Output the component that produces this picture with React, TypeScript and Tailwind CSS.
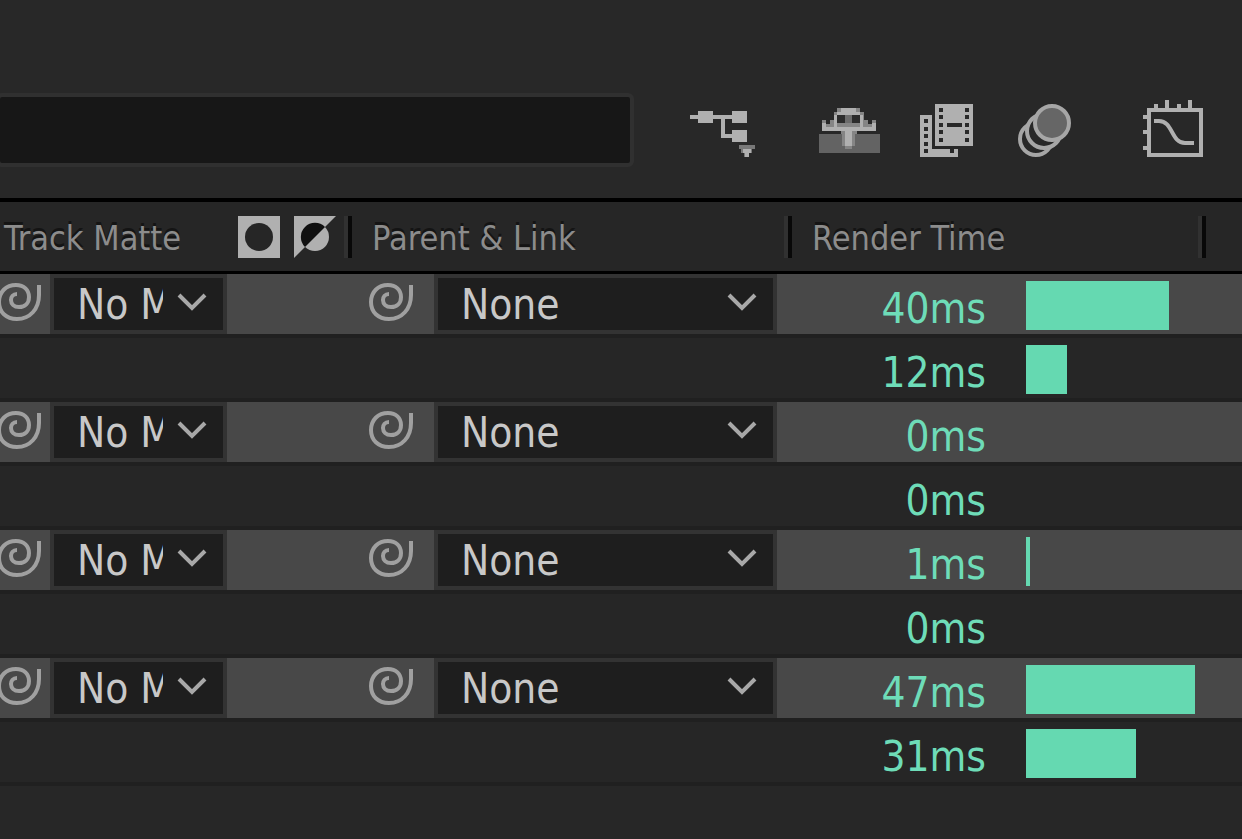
import { ReactNode } from "react"

type Layer = {
  id: number
  ms: number
  isLayer: boolean
}

const rows: Layer[] = [
  { id: 1, ms: 39.7, isLayer: true },
  { id: 2, ms: 11.5, isLayer: false },
  { id: 3, ms: 0, isLayer: true },
  { id: 4, ms: 0, isLayer: false },
  { id: 5, ms: 1.1, isLayer: true },
  { id: 6, ms: 0, isLayer: false },
  { id: 7, ms: 47, isLayer: true },
  { id: 8, ms: 30.5, isLayer: false },
]

const PX_PER_MS = 3.6

function FlowchartIcon() {
  return (
    <svg width="65" height="60" viewBox="0 0 65 60" fill="#b0b0b0">
      <path d="M0 15h8v-4h15v4h19v-4h15v12H42v-4h-7v15h7v-4h15v12H42v-4H31V19h-8v4H8v-4H0z" />
      <path d="M49 45h16v4h-3v4h-3v4h-5v-4h-3v-4h-2z" fill="#787878" />
      <path d="M53 49h8v4h-2v4h-4v-4h-2z" />
    </svg>
  )
}

function ShyIcon() {
  return (
    <svg width="61" height="60" viewBox="0 0 61 60">
      <path d="M0 34h61v19H0z" fill="#636363" />
      <path d="M3 20h4v4h4v-4h4v-5h30v5h4v4h4v-4h4v7H3zM15 12h30v5H15zM18 8h23v4H18zM22 31h16v3H22z" fill="#858585" />
      <path d="M3 23h4v4h8V15h3v-3h4V8h15v4h4v3h3v12h9v-4h4v8H3z" fill="#b0b0b0" />
      <path d="M18 15h23v12H18z" fill="#858585" />
      <path d="M18 15h8v8h-8zM33 15h8v8h-8z" fill="#2c2c2c" />
      <path d="M26 15h7v8h-7z" fill="#6c6c6c" />
      <path d="M23 31h3v15h-3zM33 31h3v15h-3zM26 46h7v3h-7z" fill="#858585" />
      <path d="M26 31h7v15h-7z" fill="#b0b0b0" />
    </svg>
  )
}

function FrameBlendIcon() {
  return (
    <svg width="58" height="60" viewBox="0 0 58 60">
      <path d="M0 15h12v34h26v8H0z" fill="#b0b0b0" />
      <path d="M15 4h38v42H15z" fill="#b0b0b0" />
      <g fill="#282828">
        {[8, 15, 23, 30, 38].map((y) => (
          <path key={y} d={`M19 ${y}h4v4h-4zM45 ${y}h4v4h-4z`} />
        ))}
        {[19, 27, 34, 42, 49].map((y) => (
          <path key={y} d={`M4 ${y}h4v4h-4z`} />
        ))}
        <path d="M27 23h15v4H27zM30 49h4v4h-4z" />
      </g>
    </svg>
  )
}

function MotionBlurIcon() {
  return (
    <svg width="53" height="60" viewBox="0 0 53 60" fill="#282828" stroke="#a6a6a6" strokeWidth="4">
      <circle cx="18" cy="39" r="16" />
      <circle cx="26" cy="31" r="17" />
      <circle cx="34" cy="23" r="17" fill="#666666" />
    </svg>
  )
}

function GraphEditorIcon() {
  return (
    <svg width="60" height="60" viewBox="0 0 60 60" fill="#b0b0b0">
      <path d="M11 4h4v4h-4zM22 0h4v8h-4zM34 4h4v4h-4zM45 0h4v8h-4zM0 15h4v4H0zM0 30h4v4H0zM0 46h4v4H0z" />
      <rect x="6" y="10" width="52" height="45" fill="none" stroke="#b0b0b0" strokeWidth="4" />
      <path d="M11 21h5c14 0 12 22 26 22h9" fill="none" stroke="#b0b0b0" strokeWidth="4" />
    </svg>
  )
}

function MatteAlphaIcon() {
  return (
    <svg width="42" height="42" viewBox="0 0 42 42">
      <path d="M0 0h42v42H0z" fill="#b0b0b0" />
      <circle cx="21" cy="21" r="14" fill="#262626" />
    </svg>
  )
}

function MatteInvertIcon() {
  return (
    <svg width="42" height="42" viewBox="0 0 42 42">
      <path d="M0 0h42L0 42z" fill="#b0b0b0" />
      <circle cx="21" cy="21" r="14" fill="#b0b0b0" />
      <path d="M31 11A14 14 0 0 0 11 31z" fill="#101010" />
    </svg>
  )
}

function PickWhip() {
  return (
    <svg width="46" height="42" viewBox="0 0 46 42" fill="none" stroke="#a0a0a0" strokeWidth="4">
      <path d="M43 4V14C43 28 34 38 21 38C10 38 3 31 3 21C3 11 10 4 20 4C28 4 33 9 33 16C33 22 29 26 23 26C18 26 15 23 15 19C15 16 17 13 21 13" />
    </svg>
  )
}

function ToolButton({ label, children }: { label: string; children: ReactNode }) {
  return (
    <button type="button" aria-label={label} className="shrink-0">
      {children}
    </button>
  )
}

function Dropdown({ label, value, className }: { label: string; value: string; className: string }) {
  return (
    <div className={`relative shrink-0 ${className}`}>
      <select
        aria-label={label}
        className="block w-full h-[60px] appearance-none border-4 border-[#333333] bg-[#1e1e1e] pt-[2px] pl-[23px] pr-[60px] text-[42px] leading-[50px] text-[#c8c8c8] outline-none"
      >
        <option>{value}</option>
      </select>
      <svg
        className="absolute right-5 top-4 pointer-events-none"
        width="30"
        height="24"
        viewBox="0 0 30 24"
        fill="none"
        stroke="#a8a8a8"
        strokeWidth="4"
      >
        <path d="M2 5l13 13L28 5" />
      </svg>
    </div>
  )
}

function HeaderCell({ title, className, children }: { title: string; className: string; children?: ReactNode }) {
  return (
    <th scope="col" className="h-[72px] p-0 border-b-[3px] border-black bg-[#262626] font-normal">
      <div className="h-[42px] border-r-4 border-[#080808]">
        <div className={`flex items-center justify-between h-full border-r-4 border-[#313131] ${className}`}>
          <span className="pt-[3px] whitespace-nowrap">{title}</span>
          {children}
        </div>
      </div>
    </th>
  )
}

export default function App() {
  return (
    <div className="min-h-screen overflow-hidden bg-[#272727] font-['DejaVu_Sans_Condensed','Noto_Sans',sans-serif] antialiased">
      {/* Search and timeline switches */}
      <div className="flex items-center pt-[93px] pb-[31px] pr-[39px] bg-[#282828]">
        <input
          type="text"
          aria-label="Search layers"
          className="flex-1 min-w-0 h-[74px] -ml-1 px-4 rounded-md border-4 border-[#303030] bg-[#171717] text-[42px] text-[#c8c8c8] outline-none"
        />
        <div className="flex items-center shrink-0 pl-14">
          <ToolButton label="Composition flowchart"><FlowchartIcon /></ToolButton>
          <div className="flex items-center gap-10 pl-16">
            <ToolButton label="Hide shy layers"><ShyIcon /></ToolButton>
            <ToolButton label="Frame blending"><FrameBlendIcon /></ToolButton>
            <ToolButton label="Motion blur"><MotionBlurIcon /></ToolButton>
          </div>
          <div className="flex items-center pl-[72px]">
            <ToolButton label="Graph editor"><GraphEditorIcon /></ToolButton>
          </div>
        </div>
      </div>

      <table className="w-full table-fixed border-separate border-spacing-0 border-t-4 border-black">
        <colgroup>
          <col className="w-[352px]" />
          <col className="w-[440px]" />
          <col className="w-[414px]" />
          <col />
        </colgroup>
        <thead className="text-[34px] leading-[42px] text-[#8c8c8c] [text-shadow:0_-3px_0_#141414]">
          <tr>
            <HeaderCell title="Track Matte" className="pl-1 pr-2">
              <span className="flex gap-[14px]">
                <MatteAlphaIcon />
                <MatteInvertIcon />
              </span>
            </HeaderCell>
            <HeaderCell title="Parent & Link" className="pl-5" />
            <HeaderCell title="Render Time" className="pl-5" />
            <td className="border-b-[3px] border-black bg-[#262626]" />
          </tr>
        </thead>
        <tbody>
          {rows.map((row) => (
            <tr key={row.id} className={row.isLayer ? "bg-[#484848]" : "bg-[#262626]"}>
              <td className="h-16 p-0 border-b-4 border-[#202020] overflow-hidden">
                {row.isLayer && (
                  <div className="flex items-center gap-2 -ml-1">
                    <button type="button" aria-label="Matte pick whip" className="shrink-0 pb-1">
                      <PickWhip />
                    </button>
                    <Dropdown label="Track Matte" value="No Matte" className="w-[177px]" />
                  </div>
                )}
              </td>
              <td className="h-16 p-0 border-b-4 border-[#202020]">
                {row.isLayer && (
                  <div className="flex items-center gap-5 pl-4">
                    <button type="button" aria-label="Parent pick whip" className="shrink-0 pb-1">
                      <PickWhip />
                    </button>
                    <Dropdown label="Parent" value="None" className="w-[343px]" />
                  </div>
                )}
              </td>
              <td colSpan={2} className="h-16 p-0 border-b-4 border-[#202020]">
                <div className="flex items-center gap-10 h-[60px]">
                  <span className="w-[194px] pt-[10px] text-right text-[42px] leading-[50px] text-[#6edcb8]">
                    {Math.round(row.ms)}ms
                  </span>
                  <div
                    className="h-[49px] mt-[3px] bg-[#65d9b1]"
                    style={{ width: Math.round(row.ms * PX_PER_MS) }}
                  />
                </div>
              </td>
            </tr>
          ))}
        </tbody>
      </table>
    </div>
  )
}
